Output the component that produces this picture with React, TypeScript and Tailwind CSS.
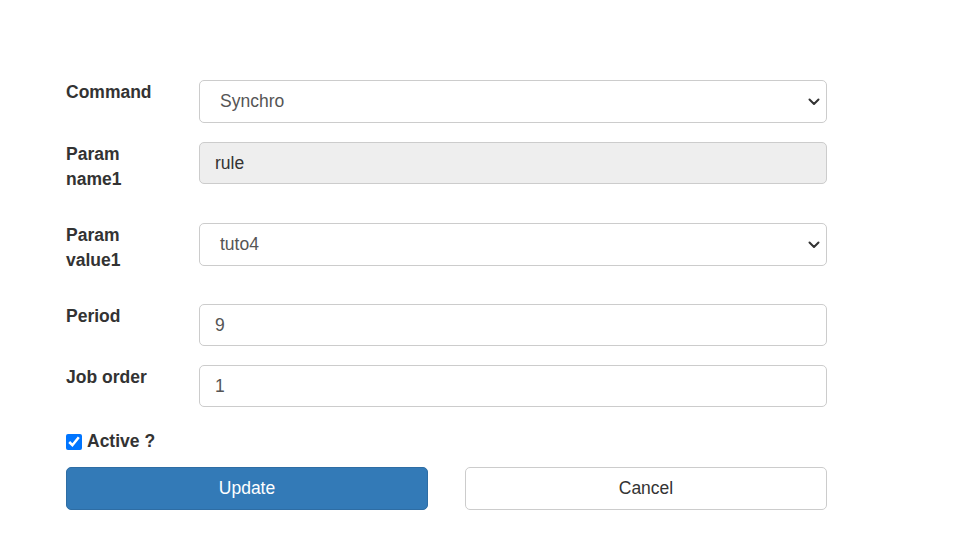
import { type ReactNode } from 'react';

const font = { fontFamily: '"Liberation Sans", Arial, sans-serif' };

const Chevron = () => (
  <svg
    className="pointer-events-none absolute right-[6px] top-1/2 -translate-y-1/2"
    width="12"
    height="8"
    viewBox="0 0 12 8"
    fill="none"
  >
    <path d="M1.5 1.5 6 6l4.5-4.5" stroke="#333" strokeWidth="2" strokeLinecap="round" strokeLinejoin="round" />
  </svg>
);

const Row = ({ label, children, className }: { label: ReactNode; children: ReactNode; className: string }) => (
  <div className={`flex items-start ${className}`}>
    <label className="w-[133px] text-[17.5px] font-bold leading-[25px] text-[#333]">{label}</label>
    <div className="w-[628px]">{children}</div>
  </div>
);

const SelectBox = ({ value }: { value: string }) => (
  <div className="relative h-[43px] rounded-[5px] border border-[#ccc] bg-white">
    <div className="flex h-full items-center pl-[20px] text-[17.5px] text-[#555]">{value}</div>
    <Chevron />
  </div>
);

const TextBox = ({ value, disabled }: { value: string; disabled?: boolean }) => (
  <div
    className={`flex h-[42px] items-center rounded-[5px] border border-[#ccc] pl-[15px] text-[17.5px] ${
      disabled ? 'bg-[#eee] text-[#333]' : 'bg-white text-[#555]'
    }`}
  >
    {value}
  </div>
);

export default function App() {
  return (
    <div className="h-[547px] w-[970px] bg-white pl-[66px] pt-[80px]" style={font}>
      <Row label="Command" className="h-[62px]">
        <SelectBox value="Synchro" />
      </Row>
      <Row
        label={
          <>
            Param
            <br />
            name1
          </>
        }
        className="h-[81px]"
      >
        <TextBox value="rule" disabled />
      </Row>
      <Row
        label={
          <>
            Param
            <br />
            value1
          </>
        }
        className="h-[81px]"
      >
        <SelectBox value="tuto4" />
      </Row>
      <Row label="Period" className="h-[61px]">
        <TextBox value="9" />
      </Row>
      <Row label="Job order" className="h-[61px]">
        <TextBox value="1" />
      </Row>
      <div className="flex h-[41px] items-start gap-[5px] pt-[3px]">
        <div className="flex h-[25px] items-center">
          <input type="checkbox" defaultChecked className="m-0 h-[16px] w-[16px] accent-[#0075ff]" />
        </div>
        <span className="text-[17.5px] font-bold leading-[25px] text-[#333]">Active ?</span>
      </div>
      <div className="flex w-[761px] gap-[37px]">
        <button className="h-[43px] w-[362px] rounded-[5px] border border-[#2e6da4] bg-[#337ab7] text-[17.5px] text-white">
          Update
        </button>
        <button className="h-[43px] w-[362px] rounded-[5px] border border-[#ccc] bg-white text-[17.5px] text-[#333]">
          Cancel
        </button>
      </div>
    </div>
  );
}
